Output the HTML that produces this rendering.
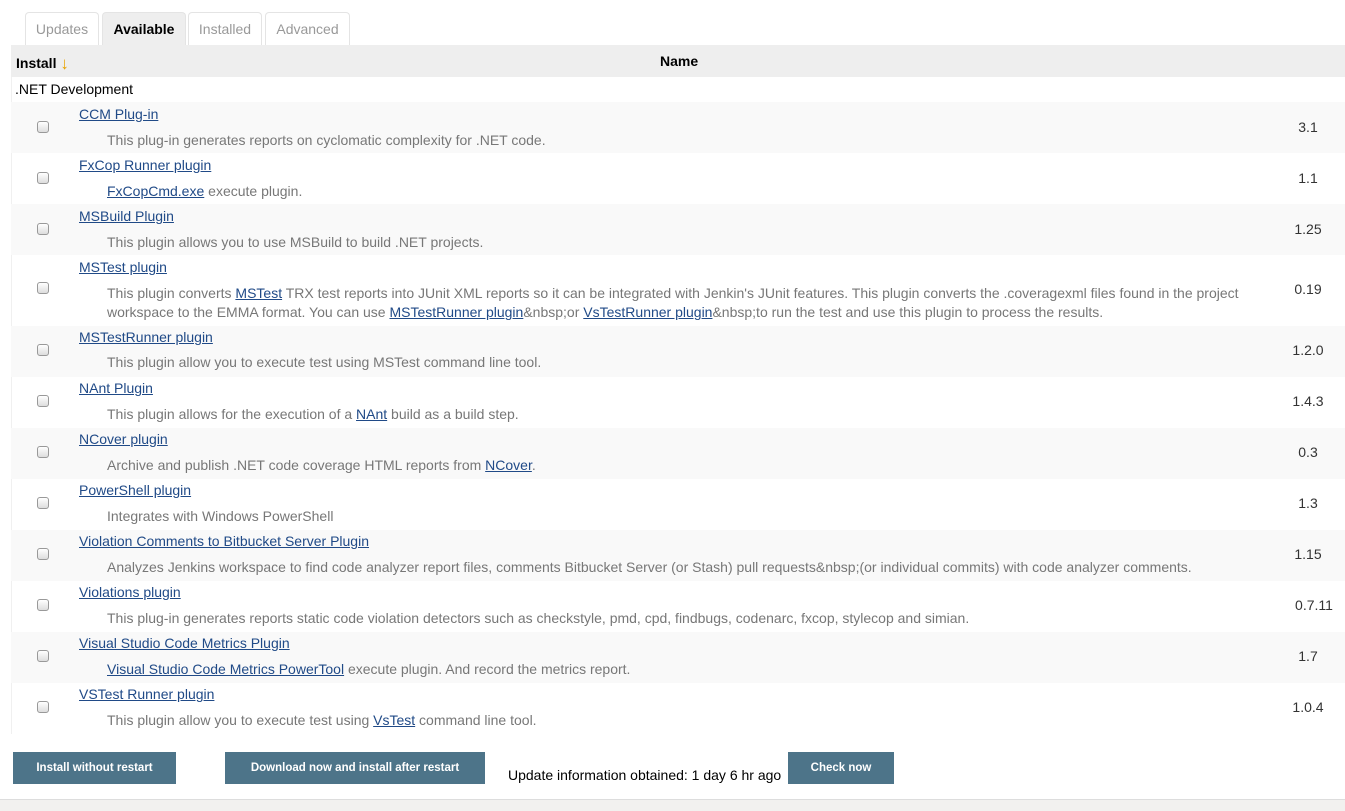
<!DOCTYPE html>
<html><head><meta charset="utf-8"><style>
*{margin:0;padding:0;box-sizing:border-box}
body{width:1345px;height:811px;overflow:hidden;background:#fff;font-family:"Liberation Sans",Arial,sans-serif;font-size:14px;color:#333;position:relative}
.a{position:absolute;white-space:nowrap}
.tab{position:absolute;top:12px;height:33px;border:1px solid #e4e4e4;border-bottom:none;border-radius:4px 4px 0 0;color:#999;font-size:14px;line-height:32px;text-align:center}
.row{position:absolute;left:11px;width:1334px}
.l{color:#204a87;text-decoration:underline}
.d{color:#777}
.v{position:absolute;left:1267px;width:60px;text-align:center}
.cb{position:absolute;left:26px;width:12px;height:12px;border:1px solid #999;border-radius:3px;background:linear-gradient(#fff,#ddd)}
.btn{position:absolute;top:752px;height:32px;background:#4d7489;color:#fff;font-weight:bold;font-size:11.5px;line-height:32px;text-align:center}
</style></head><body>
<div class="tab" style="left:25px;width:74px">Updates</div>
<div class="tab" style="left:102px;width:84px;background:#eee;color:#000;font-weight:bold">Available</div>
<div class="tab" style="left:188px;width:74px">Installed</div>
<div class="tab" style="left:265px;width:85px">Advanced</div>
<div class="a" style="left:11px;top:45px;width:1334px;height:32px;background:#eee"></div>
<div class="a" style="left:16px;top:53px;font-weight:bold;color:#000">Install <span style="color:#e8a200;font-weight:normal;font-size:17px;position:relative;top:1px">↓</span></div>
<div class="a" style="left:660px;top:53px;font-weight:bold;color:#000">Name</div>
<div class="a" style="left:15px;top:81px;color:#000">.NET Development</div>
<div class="a" style="left:11px;top:77px;width:1px;height:657px;background:#f0f0f0"></div>

<div class="row" style="top:102px;height:51px;background:#f9f9f9"><div class="cb" style="top:19px"></div><span class="a l" style="left:68px;top:4px">CCM Plug-in</span><span class="a d" style="left:96px;top:30px">This plug-in generates reports on cyclomatic complexity for .NET code.</span><span class="v" style="top:17px">3.1</span></div>
<div class="row" style="top:153px;height:51px"><div class="cb" style="top:19px"></div><span class="a l" style="left:68px;top:4px">FxCop Runner plugin</span><span class="a d" style="left:96px;top:30px"><span class="l">FxCopCmd.exe</span> execute plugin.</span><span class="v" style="top:17px">1.1</span></div>
<div class="row" style="top:204px;height:51px;background:#f9f9f9"><div class="cb" style="top:19px"></div><span class="a l" style="left:68px;top:4px">MSBuild Plugin</span><span class="a d" style="left:96px;top:30px">This plugin allows you to use MSBuild to build .NET projects.</span><span class="v" style="top:17px">1.25</span></div>
<div class="row" style="top:255px;height:71px"><div class="cb" style="top:27px"></div><span class="a l" style="left:68px;top:4px">MSTest plugin</span><span class="a d" style="left:96px;top:29px;line-height:19px">This plugin converts <span class="l">MSTest</span> TRX test reports into JUnit XML reports so it can be integrated with Jenkin's JUnit features. This plugin converts the .coveragexml files found in the project<br>workspace to the EMMA format. You can use <span class="l">MSTestRunner plugin</span>&amp;nbsp;or <span class="l">VsTestRunner plugin</span>&amp;nbsp;to run the test and use this plugin to process the results.</span><span class="v" style="top:26px">0.19</span></div>
<div class="row" style="top:326px;height:51px;background:#f9f9f9"><div class="cb" style="top:18px"></div><span class="a l" style="left:68px;top:3px">MSTestRunner plugin</span><span class="a d" style="left:96px;top:28px">This plugin allow you to execute test using MSTest command line tool.</span><span class="v" style="top:16px">1.2.0</span></div>
<div class="row" style="top:377px;height:51px"><div class="cb" style="top:18px"></div><span class="a l" style="left:68px;top:3px">NAnt Plugin</span><span class="a d" style="left:96px;top:29px">This plugin allows for the execution of a <span class="l">NAnt</span> build as a build step.</span><span class="v" style="top:16px">1.4.3</span></div>
<div class="row" style="top:428px;height:51px;background:#f9f9f9"><div class="cb" style="top:18px"></div><span class="a l" style="left:68px;top:3px">NCover plugin</span><span class="a d" style="left:96px;top:29px">Archive and publish .NET code coverage HTML reports from <span class="l">NCover</span>.</span><span class="v" style="top:16px">0.3</span></div>
<div class="row" style="top:479px;height:51px"><div class="cb" style="top:18px"></div><span class="a l" style="left:68px;top:3px">PowerShell plugin</span><span class="a d" style="left:96px;top:29px">Integrates with Windows PowerShell</span><span class="v" style="top:16px">1.3</span></div>
<div class="row" style="top:530px;height:51px;background:#f9f9f9"><div class="cb" style="top:18px"></div><span class="a l" style="left:68px;top:3px">Violation Comments to Bitbucket Server Plugin</span><span class="a d" style="left:96px;top:29px">Analyzes Jenkins workspace to find code analyzer report files, comments Bitbucket Server (or Stash) pull requests&amp;nbsp;(or individual commits) with code analyzer comments.</span><span class="v" style="top:16px">1.15</span></div>
<div class="row" style="top:581px;height:51px"><div class="cb" style="top:18px"></div><span class="a l" style="left:68px;top:3px">Violations plugin</span><span class="a d" style="left:96px;top:29px">This plug-in generates reports static code violation detectors such as checkstyle, pmd, cpd, findbugs, codenarc, fxcop, stylecop and simian.</span><span class="v" style="top:16px;left:1273px">0.7.11</span></div>
<div class="row" style="top:632px;height:51px;background:#f9f9f9"><div class="cb" style="top:18px"></div><span class="a l" style="left:68px;top:3px">Visual Studio Code Metrics Plugin</span><span class="a d" style="left:96px;top:29px"><span class="l">Visual Studio Code Metrics PowerTool</span> execute plugin. And record the metrics report.</span><span class="v" style="top:16px">1.7</span></div>
<div class="row" style="top:683px;height:51px"><div class="cb" style="top:18px"></div><span class="a l" style="left:68px;top:3px">VSTest Runner plugin</span><span class="a d" style="left:96px;top:29px">This plugin allow you to execute test using <span class="l">VsTest</span> command line tool.</span><span class="v" style="top:16px">1.0.4</span></div>

<div class="btn" style="left:13px;width:163px">Install without restart</div>
<div class="btn" style="left:225px;width:260px">Download now and install after restart</div>
<div class="a" style="left:508px;top:767px;color:#000">Update information obtained: 1 day 6 hr ago</div>
<div class="btn" style="left:788px;width:106px">Check now</div>
<div class="a" style="left:0;top:799px;width:1345px;height:12px;background:#f2f1ef;border-top:1px solid #ddd"></div>
</body></html>
